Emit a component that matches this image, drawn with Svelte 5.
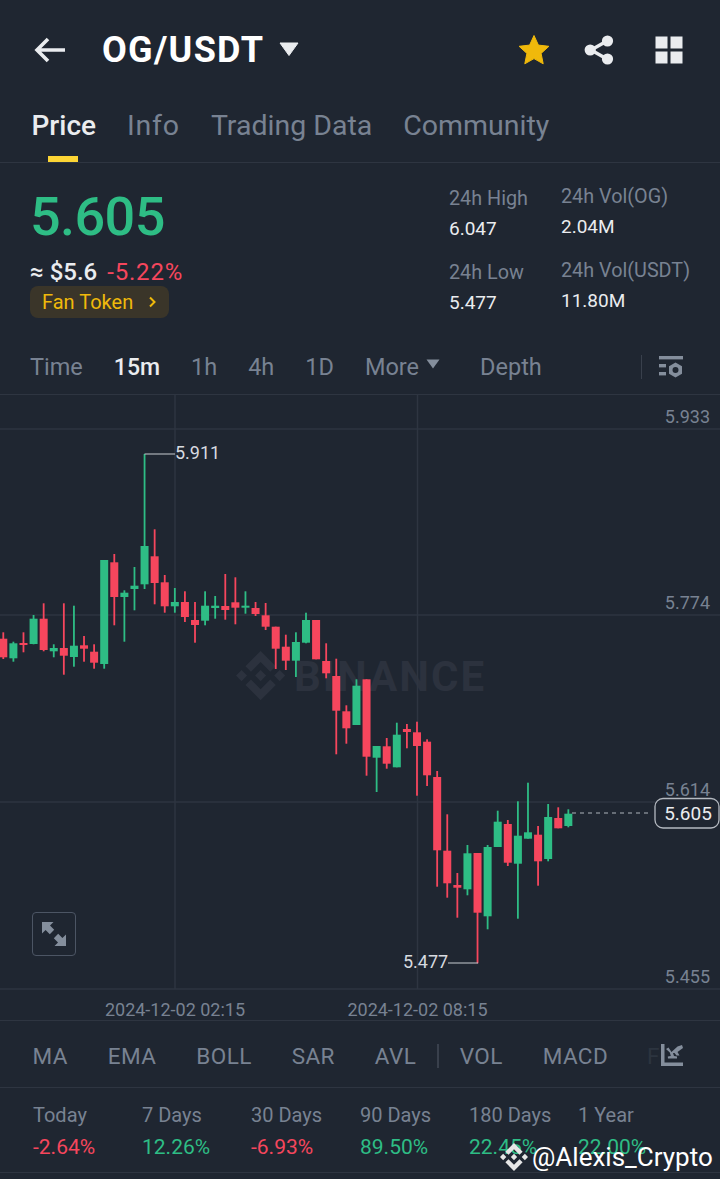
<script lang="ts">
  const tabs = ['Price', 'Info', 'Trading Data', 'Community'];
  const intervals = ['Time', '15m', '1h', '4h', '1D'];
  const mainInd = ['MA', 'EMA', 'BOLL', 'SAR', 'AVL'];
  const subInd = ['VOL', 'MACD'];
  const perf = [
    { label: 'Today', value: '-2.64%', up: false },
    { label: '7 Days', value: '12.26%', up: true },
    { label: '30 Days', value: '-6.93%', up: false },
    { label: '90 Days', value: '89.50%', up: true },
    { label: '180 Days', value: '22.45%', up: true },
    { label: '1 Year', value: '22.00%', up: true }
  ];
  const gridY = [
    { y: 429, label: '5.933' },
    { y: 615, label: '5.774' },
    { y: 802, label: '5.614' },
    { y: 989, label: '5.455' }
  ];

  // up, wick top, body top, body bottom, wick bottom (page y)
  const raw = [
    [0, 632.3, 638.7, 657.3, 659], [1, 641.7, 643.3, 658.3, 661.7], [0, 632.3, 643, 645, 652.3],
    [1, 615, 618.7, 644, 644.3], [0, 603.3, 618.7, 650, 651.3], [1, 644.3, 648, 651.3, 657.3],
    [0, 603.3, 648, 655.7, 674.7], [1, 605.7, 645.7, 657, 666.7], [0, 636, 645.3, 648.7, 661.7],
    [0, 644.3, 651.7, 662.7, 668.7], [1, 560, 560, 664, 668.7], [0, 554, 562.3, 597, 625.3],
    [1, 590.3, 592.7, 597, 641.7], [1, 567, 585.7, 589, 610.3], [1, 454, 546, 584.3, 589],
    [0, 529.3, 556.3, 583, 604.3], [0, 575, 582.3, 606.3, 612.7], [1, 588, 602, 606.3, 612.7],
    [0, 591.3, 602, 617, 622], [0, 602, 620, 625, 642.7], [1, 591.3, 605.7, 620.7, 625.3],
    [1, 596, 605.7, 608, 618.7], [0, 574, 606, 610, 619.7], [0, 577.3, 602.3, 607.7, 624.3],
    [1, 591.3, 605.7, 607.7, 613.7], [0, 602, 608, 614, 616], [0, 603, 615.3, 626.7, 630],
    [0, 626.7, 626.7, 648.7, 669], [0, 634.7, 646.7, 660.7, 670], [1, 632.3, 642, 660.7, 677],
    [1, 612.7, 620, 642.7, 643.3], [0, 620, 620, 659.3, 659.3], [0, 643.3, 661, 673.3, 678.3],
    [0, 658.7, 676, 710.7, 754.3], [0, 705.3, 711.3, 728.3, 743.7], [1, 679.3, 685.7, 725, 725],
    [0, 679.3, 679.3, 756.7, 775.7], [1, 746, 746, 757.7, 792], [0, 738, 746.3, 763.7, 768.7],
    [1, 722.7, 734.7, 767.3, 767.3], [0, 724, 729, 732, 748.3], [0, 721.7, 732.3, 746, 795.7],
    [0, 739.3, 741.7, 775.3, 786], [0, 771, 777, 850.3, 886.7], [0, 814.3, 850.7, 883.3, 897.7],
    [0, 873, 885, 887.7, 917.7], [1, 845, 853.3, 889.3, 895.3], [0, 853, 853, 912.7, 963.3],
    [1, 845, 847, 916.3, 929.3], [1, 810.7, 821.7, 847, 847], [0, 820, 824, 862.7, 866],
    [1, 801.3, 835.7, 863.7, 918.7], [1, 782.7, 832.3, 838.7, 838.7], [0, 826, 834.7, 861.3, 885.7],
    [1, 804, 817, 859, 861.3], [0, 807.3, 818, 828.3, 828.3], [1, 809.3, 813.7, 826, 827.3]
  ];
  const candles = raw.map((c, i) => ({
    x: 3.3 + i * 10.09,
    color: c[0] ? '#2ebd85' : '#f6465d',
    wt: c[1], bt: c[2], bb: c[3], wb: c[4]
  }));

  const logo = 'M7.3 10.1 12 5.4l4.7 4.7 2.7-2.7L12 0 4.6 7.4zM7.3 13.9 12 18.6l4.7-4.7 2.7 2.7L12 24l-7.4-7.4zM0 12l2.7-2.7L5.4 12l-2.7 2.7zM18.6 12l2.7-2.7L24 12l-2.7 2.7zM14.7 12 12 9.3 9.3 12l2.7 2.7z';
</script>

<div class="page">
  <header class="top">
    <svg class="back" width="32" height="26" viewBox="0 0 32 26" fill="none" stroke="#eaecef" stroke-width="3.6">
      <path d="M31 13H3M14 2 3 13l11 11" />
    </svg>
    <span class="pair">OG/USDT</span>
    <svg class="caret" width="20" height="14" viewBox="0 0 20 14"><path d="M1 1h18l-9 12.5z" fill="#eaecef" stroke="#eaecef" stroke-linejoin="round" /></svg>
    <div class="actions">
      <svg width="32" height="32" viewBox="0 0 32 32"><path d="M16 1.5l4.4 9.6 10.5 1.2-7.8 7.1 2.1 10.4L16 24.6l-9.2 5.2 2.1-10.4-7.8-7.1 10.5-1.2z" fill="#f0b90b" stroke="#f0b90b" stroke-linejoin="round" /></svg>
      <svg width="30" height="30" viewBox="0 0 30 30">
        <path d="M23 6 7 15l16 9" fill="none" stroke="#eaecef" stroke-width="3.4" />
        <circle cx="23.5" cy="6" r="5.6" fill="#eaecef" /><circle cx="6.2" cy="15" r="5.6" fill="#eaecef" /><circle cx="23.5" cy="24" r="5.6" fill="#eaecef" />
      </svg>
      <svg class="layout-icon" width="28" height="28" viewBox="0 0 28 28" fill="#eaecef">
        <rect x="0.5" y="0.5" width="12" height="12" /><rect x="15.5" y="0.5" width="12" height="12" />
        <rect x="0.5" y="15.5" width="12" height="12" /><rect x="15.5" y="15.5" width="12" height="12" />
      </svg>
    </div>
  </header>

  <nav class="tabs">
    {#each tabs as tab, i}
      <span class="tab" class:active={i === 0}>{tab}</span>
    {/each}
  </nav>

  <section class="summary">
    <div class="price-col">
      <div class="last">5.605</div>
      <div class="fiat"><span class="usd">≈ $5.6</span><span class="red">-5.22%</span></div>
      <div class="fan">Fan Token
        <svg width="9" height="12" viewBox="0 0 9 12" fill="none" stroke="#f0b90b" stroke-width="2"><path d="M2 1.5 6.5 6 2 10.5" /></svg>
      </div>
    </div>
    <div class="stats">
      <div class="stat">
        <div class="stat-label">24h High</div><div class="stat-value">6.047</div>
        <div class="stat-label second">24h Low</div><div class="stat-value">5.477</div>
      </div>
      <div class="stat shifted">
        <div class="stat-label">24h Vol(OG)</div><div class="stat-value">2.04M</div>
        <div class="stat-label second">24h Vol(USDT)</div><div class="stat-value">11.80M</div>
      </div>
    </div>
  </section>

  <div class="intervals">
    {#each intervals as item}
      <span class:current={item === '15m'}>{item}</span>
    {/each}
    <span class="more">More
      <svg width="14" height="10" viewBox="0 0 14 10"><path d="M0.5 0.5h13L7 9.5z" fill="#848e9c" /></svg>
    </span>
    <span class="depth">Depth</span>
    <i class="sep"></i>
    <svg class="settings" width="26" height="24" viewBox="0 0 26 24" fill="#848e9c">
      <rect x="1" y="1" width="24" height="3.4" />
      <rect x="1" y="9" width="7" height="3.4" /><rect x="1" y="17" width="7" height="3.4" />
      <path fill-rule="evenodd" d="M17.5 7.5l6.5 3.7v7.6l-6.5 3.7-6.5-3.7v-7.6zM17.5 12a3 3 0 1 0 0 6 3 3 0 0 0 0-6z" />
    </svg>
  </div>

  <div class="chart">
    <svg class="plot" width="720" height="626" viewBox="0 395 720 626">
      <g fill="#2c323e">
        <path d={logo} transform="translate(236 651) scale(2.05)" />
        <text class="brand" x="294" y="691">BINANCE</text>
      </g>
      {#each gridY as g}
        <line x1="0" x2="720" y1={g.y} y2={g.y} stroke="#2e3541" stroke-width="1.5" />
        <text class="axis" x="710" y={g.y - 6} text-anchor="end">{g.label}</text>
      {/each}
      <line x1="175" x2="175" y1="395" y2="989" stroke="#2e3541" stroke-width="1.5" />
      <line x1="417.5" x2="417.5" y1="395" y2="989" stroke="#2e3541" stroke-width="1.5" />
      <text class="axis" x="175" y="1016" text-anchor="middle">2024-12-02 02:15</text>
      <text class="axis" x="417.5" y="1016" text-anchor="middle">2024-12-02 08:15</text>

      {#each candles as c}
        <rect x={c.x - 0.9} y={c.wt} width="1.8" height={c.wb - c.wt} fill={c.color} />
        <rect x={c.x - 4} y={c.bt} width="8" height={Math.max(c.bb - c.bt, 2)} fill={c.color} />
      {/each}

      <path d="M144.5 454H175M448 963h30" stroke="#c8ccd2" stroke-width="1.2" fill="none" />
      <text class="mark" x="175" y="459">5.911</text>
      <text class="mark" x="403" y="968">5.477</text>

      <line x1="572" x2="650" y1="813" y2="813" stroke="#aeb4bc" stroke-width="1.2" stroke-dasharray="4 4" />
      <rect x="655" y="798.5" width="64" height="29.5" rx="8" fill="#1f2631" stroke="#b4b9c0" stroke-width="1.3" />
      <text class="tag" x="688" y="820" text-anchor="middle">5.605</text>
    </svg>

    <button class="expand" aria-label="Expand chart">
      <svg width="26" height="26" viewBox="0 0 26 26" fill="#848e9c">
        <path d="M1 1h11.5L9 4.6 13.2 8.8 8.8 13.2 4.6 9 1 12.5zM25 25H13.5L17 21.4l-4.2-4.2 4.4-4.4 4.2 4.2L25 13.5z" />
      </svg>
    </button>
  </div>

  <div class="indicators">
    {#each mainInd as item}
      <span>{item}</span>
    {/each}
    <i class="sep"></i>
    {#each subInd as item}
      <span>{item}</span>
    {/each}
    <span class="faded">F</span>
    <svg class="ind-icon" width="24" height="24" viewBox="0 0 24 24" fill="#848e9c">
      <path d="M1 1h3.5v18.5H23V23H1z" />
      <path d="M6 6l2.5-1.5 3 4.5 6-5.5L22 2l1 3-5.5 4 2 3.5h-3l-2-2.5H13l1 3 3 .5v2H8l-.2-2 3-.5-1-3.5z" />
    </svg>
  </div>

  <section class="perf">
    {#each perf as p}
      <div class="perf-cell">
        <div class="perf-label">{p.label}</div>
        <div class:green={p.up} class:red={!p.up} class="perf-value">{p.value}</div>
      </div>
    {/each}
  </section>

  <div class="watermark">
    <svg width="28" height="28" viewBox="0 0 24 24"><path d={logo} fill="#e6e6e6" /></svg>
    <span>@Alexis_Crypto</span>
  </div>
</div>

<style>
  :global(body) {
    margin: 0;
    background: #1f2631;
  }

  .page {
    position: relative;
    width: 720px;
    height: 1179px;
    overflow: hidden;
    background: #1f2631;
    color: #eaecef;
    font-family: Roboto, "Noto Sans", sans-serif;
  }

  .red { color: #f6465d; }
  .green { color: #2ebd85; }

  .top {
    display: flex;
    align-items: center;
    height: 100px;
    padding: 0 37px 0 34px;
    box-sizing: border-box;
  }

  .pair {
    margin-left: 36px;
    font-size: 36px;
    font-weight: 700;
    letter-spacing: 1.3px;
    color: #fff;
  }

  .caret {
    margin: 0 0 2px 15px;
  }

  .actions {
    display: flex;
    align-items: center;
    gap: 34px;
    margin-left: auto;
  }

  .layout-icon {
    margin-left: 7px;
  }

  .tabs {
    display: flex;
    gap: 31px;
    height: 63px;
    padding-left: 31.5px;
    border-bottom: 1.5px solid #2e3541;
    box-sizing: border-box;
  }

  .tab {
    position: relative;
    font-size: 28.5px;
    line-height: 52px;
    color: #788292;
  }

  .tab:nth-child(2) {
    letter-spacing: 0.8px;
  }

  .tab.active {
    color: #eaecef;
    font-size: 28px;
    font-weight: 500;
  }

  .tab.active::after {
    content: '';
    position: absolute;
    left: 16.5px;
    bottom: 0;
    width: 30px;
    height: 6px;
    background: #fcd535;
  }

  .summary {
    display: flex;
    justify-content: space-between;
    height: 182px;
    padding: 23px 0 0 30px;
    box-sizing: border-box;
  }

  .last {
    font-size: 54px;
    line-height: 62px;
    font-weight: 500;
    letter-spacing: -0.6px;
    color: #2ebd85;
  }

  .fiat {
    display: flex;
    gap: 10px;
    margin-top: 9px;
    font-size: 24px;
    line-height: 30px;
  }

  .usd {
    font-weight: 500;
  }

  .fiat .red {
    letter-spacing: 0.8px;
  }

  .fan {
    display: inline-flex;
    align-items: center;
    gap: 15px;
    margin-top: -1px;
    padding: 0 12px;
    height: 32px;
    border-radius: 8px;
    background: #3a3529;
    color: #f0b90b;
    font-size: 20px;
  }

  .stats {
    display: flex;
    width: 271px;
    margin-top: -1px;
  }

  .stat {
    width: 112px;
  }

  .stat.shifted {
    width: 159px;
    margin-top: -2px;
  }

  .stat-label {
    font-size: 19.8px;
    line-height: 28px;
    color: #788292;
    white-space: nowrap;
  }

  .stat-label.second {
    margin-top: 17px;
  }

  .stat-value {
    margin-top: 3px;
    font-size: 19px;
    line-height: 26px;
    color: #eaecef;
  }

  .intervals {
    display: flex;
    align-items: center;
    gap: 31px;
    height: 50px;
    padding: 0 36px 5px 30px;
    box-sizing: border-box;
    border-bottom: 1.5px solid #2e3541;
    font-size: 23.5px;
    color: #788292;
  }

  .intervals .current {
    color: #eaecef;
    font-size: 23px;
    font-weight: 500;
  }

  .more {
    display: inline-flex;
    align-items: center;
    gap: 7px;
  }

  .more svg {
    margin-bottom: 6px;
  }

  .depth {
    margin-left: 9px;
  }

  .sep {
    display: block;
    width: 1.5px;
    height: 24px;
    background: #39404c;
  }

  .intervals .sep {
    margin-left: auto;
  }

  .settings {
    margin-left: -15px;
  }

  .chart {
    position: relative;
    height: 626px;
    border-bottom: 1.5px solid #2e3541;
    box-sizing: border-box;
  }

  .plot {
    display: block;
  }

  .brand {
    font-size: 42px;
    font-weight: 700;
    letter-spacing: 2px;
  }

  .axis {
    font-size: 18px;
    fill: #788292;
  }

  .mark {
    font-size: 18px;
    fill: #d8dbe0;
  }

  .tag {
    font-size: 19px;
    fill: #eaecef;
  }

  .expand {
    position: absolute;
    left: 32px;
    top: 517px;
    display: flex;
    align-items: center;
    justify-content: center;
    width: 44px;
    height: 44px;
    padding: 0;
    background: none;
    border: 1.5px solid #4c5564;
    border-radius: 4px;
    box-sizing: border-box;
  }

  .indicators {
    display: flex;
    align-items: center;
    gap: 40px;
    height: 67px;
    padding: 4px 0 0 32.5px;
    box-sizing: border-box;
    border-bottom: 1.5px solid #2e3541;
    font-size: 22.5px;
    letter-spacing: 0.4px;
    color: #788292;
  }

  .indicators .sep {
    height: 24px;
    margin: 0 -19px;
  }

  .faded {
    margin-left: -1px;
    opacity: 0.15;
  }

  .ind-icon {
    flex-shrink: 0;
    margin-left: -40px;
    margin-bottom: 3px;
  }

  .perf {
    display: grid;
    grid-template-columns: repeat(6, 109px);
    height: 85px;
    padding: 12px 0 0 33px;
    box-sizing: border-box;
    border-bottom: 1.5px solid #2e3541;
  }

  .perf-label {
    font-size: 20px;
    line-height: 30px;
    color: #788292;
  }

  .perf-value {
    margin-top: 2px;
    font-size: 21px;
    line-height: 30px;
    white-space: nowrap;
  }

  .watermark {
    position: absolute;
    left: 500px;
    top: 1141px;
    display: flex;
    align-items: center;
    gap: 4px;
    color: #fff;
    font-size: 26px;
    line-height: 32px;
    white-space: nowrap;
  }
</style>
